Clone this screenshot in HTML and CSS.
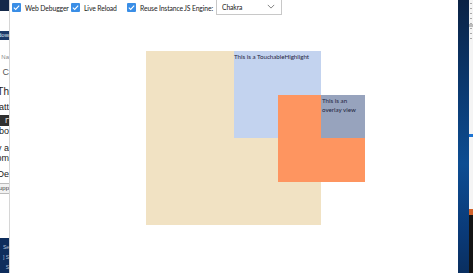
FILE: index.html
```html
<!DOCTYPE html>
<html>
<head>
<meta charset="utf-8">
<link rel="stylesheet" href="styles.css">
</head>
<body>
<div class="screen">
  <div class="behind">
    <div class="b-title"></div>
    <div class="b-row b-nav"><span>Shadow</span></div>
    <div class="b-row b-small"><span>Na</span></div>
    <div class="b-row b-icon"><span>C</span></div>
    <div class="b-row b-big"><span>Th</span></div>
    <div class="b-row b-big2"><span>Platt</span></div>
    <div class="b-row b-code"><span>t r</span></div>
    <div class="b-row b-big3"><span>Webo</span></div>
    <div class="b-row b-big4"><span>way a</span></div>
    <div class="b-row b-big5"><span>from</span></div>
    <div class="b-row b-big6"><span>De</span></div>
    <div class="b-row b-btn"><span>upp</span></div>
    <div class="b-foot">
      <div class="b-row"><span>Se</span></div>
      <div class="b-row"><span>] S</span></div>
      <div class="b-row"><span>S</span></div>
    </div>
  </div>
  <div class="main">
    <div class="toolbar">
      <label class="opt opt-web"><span class="cb"><svg viewBox="0 0 10 10" width="9" height="9"><path d="M2 5.2 L4.1 7.2 L8 2.8" fill="none" stroke="#fff" stroke-width="1.2"/></svg></span>Web Debugger</label>
      <label class="opt opt-live"><span class="cb"><svg viewBox="0 0 10 10" width="9" height="9"><path d="M2 5.2 L4.1 7.2 L8 2.8" fill="none" stroke="#fff" stroke-width="1.2"/></svg></span>Live Reload</label>
      <label class="opt opt-reuse"><span class="cb"><svg viewBox="0 0 10 10" width="9" height="9"><path d="M2 5.2 L4.1 7.2 L8 2.8" fill="none" stroke="#fff" stroke-width="1.2"/></svg></span>Reuse Instance</label>
      <span class="engine">JS Engine:</span>
      <div class="select"><span>Chakra</span><svg class="chev" viewBox="0 0 10 6" width="8" height="5"><path d="M1 1 L5 5 L9 1" fill="none" stroke="#555" stroke-width="0.9"/></svg></div>
    </div>
    <div class="stage">
      <div class="beige">
        <div class="blue"><span class="label">This is a TouchableHighlight</span></div>
        <div class="orange"></div>
        <div class="overlay"><span class="label">This is an overlay view</span></div>
      </div>
    </div>
  </div>
  <div class="desk"></div>
  <div class="rwin">
    <div class="r-ticks"></div>
    <div class="r-gray"></div>
    <div class="r-blue"></div>
    <div class="r-orange"></div>
    <div class="r-dark"></div>
  </div>
</div>
</body>
</html>
```
FILE: styles.css
```css
* { box-sizing: border-box; }
html, body { margin: 0; padding: 0; }
body { width: 474px; height: 273px; overflow: hidden; background: #fff; font-family: "Lato", "Open Sans", sans-serif; }
.screen { display: flex; width: 474px; height: 273px; }

.behind { width: 10px; flex: none; position: relative; background: #fff; overflow: hidden; border-right: 1px solid #d6d6d6; display: flex; flex-direction: column; font-family: "Liberation Sans", sans-serif; }
.b-row { display: flex; justify-content: flex-end; white-space: nowrap; overflow: hidden; width: 9px; flex: none; }
.b-title { height: 11px; background: #14294a; flex: none; }
.b-nav { margin-top: 20px; height: 9px; background: #1b3968; color: #dfe6f2; font-size: 6px; line-height: 9px; }
.b-small { margin-top: 12px; height: 10px; color: #8a8a8a; font-size: 6px; line-height: 10px; }
.b-icon { margin-top: 5px; height: 10px; color: #555; font-size: 9px; line-height: 10px; }
.b-big { margin-top: 8px; height: 13px; color: #222; font-size: 10px; line-height: 13px; }
.b-big2 { margin-top: 3px; height: 12px; color: #222; font-size: 9px; line-height: 12px; }
.b-code { margin-top: 2px; height: 11px; background: #2f2f2f; color: #eee; font-size: 8px; line-height: 11px; font-family: "DejaVu Sans Mono", monospace; }
.b-big3 { height: 11px; color: #222; font-size: 9px; line-height: 11px; }
.b-big4 { margin-top: 7px; height: 9px; color: #222; font-size: 9px; line-height: 9px; }
.b-big5 { height: 10px; color: #222; font-size: 9px; line-height: 10px; }
.b-big6 { margin-top: 6px; height: 11px; color: #222; font-size: 9px; line-height: 11px; }
.b-btn { margin-top: 3px; height: 11px; background: #f2f2f2; border-top: 1px solid #bbb; border-bottom: 1px solid #bbb; color: #444; font-size: 6px; line-height: 9px; }
.b-foot { margin-top: auto; height: 35px; background: #0e2d5c; display: flex; flex-direction: column; padding-top: 6px; gap: 3px; }
.b-foot .b-row { color: #b9c6dc; font-size: 5px; line-height: 7px; height: 7px; }

.main { width: 448px; flex: none; background: #fff; display: flex; flex-direction: column; }
.toolbar { height: 15px; display: flex; align-items: center; padding-left: 2px; font-size: 6.8px; letter-spacing: -0.12px; color: #222; flex: none; }
.opt { display: flex; align-items: center; white-space: nowrap; }
.cb { width: 9px; height: 9px; background: #3a8ee6; border-radius: 1px; display: flex; align-items: center; justify-content: center; margin-right: 4px; flex: none; }
.cb svg { display: block; }
.opt-web { width: 59px; }
.opt-live { width: 56px; }
.opt-reuse { width: 57px; }
.engine { white-space: nowrap; width: 32px; }
.select { width: 66px; height: 16px; margin-top: -2px; border: 1px solid #c8c8c8; display: flex; align-items: center; justify-content: space-between; padding: 0 6px 0 5px; font-size: 6.8px; color: #222; background: #fff; }
.chev { display: block; }

.stage { flex: 1; padding: 36px 0 0 136px; }
.beige { position: relative; width: 175px; height: 174px; background: #f1e2c3; }
.blue { position: absolute; left: 88px; top: 0; width: 87px; height: 87px; background: #c3d3ef; }
.orange { position: absolute; left: 132px; top: 44px; width: 87px; height: 87px; background: #fe9560; }
.overlay { position: absolute; left: 175px; top: 44px; width: 44px; height: 43px; background: #97a3bd; }
.label { display: block; font-size: 6.2px; line-height: 9px; color: #1e2440; padding: 1px 0 0 0; }
.overlay .label { padding-left: 1px; }

.desk { width: 11px; flex: none; background: linear-gradient(180deg, #0b2244 0%, #0b3b73 35%, #0d4d92 60%, #0a3a78 85%, #0a2f60 100%); }
.rwin { width: 4px; flex: none; background: #f4f4f4; position: relative; }
.r-ticks { position: absolute; left: 1px; top: 3px; width: 2px; height: 36px; background: repeating-linear-gradient(180deg, #aaa 0 1px, transparent 1px 5px); }
.r-gray { position: absolute; left: 0; top: 24px; width: 4px; height: 3px; background: #bbb; }
.r-blue { position: absolute; left: 0; top: 134px; width: 4px; height: 3px; background: #1d74d2; }
.r-orange { position: absolute; left: 0; top: 209px; width: 4px; height: 6px; background: #d2622a; }
.r-dark { position: absolute; left: 0; top: 215px; width: 4px; bottom: 0; background: #141414; }
```
